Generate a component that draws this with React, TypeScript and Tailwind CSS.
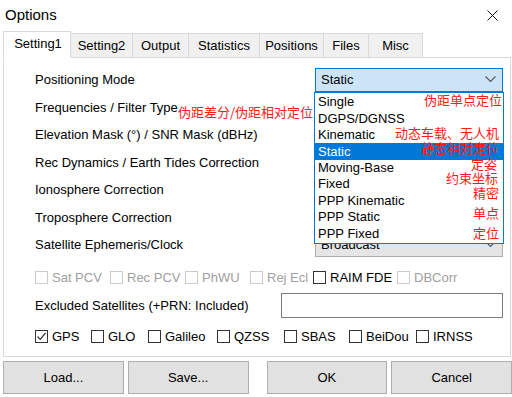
import React from 'react';

const font = { fontFamily: '"Liberation Sans", Arial, sans-serif' };
const cjk = { fontFamily: '"Noto Sans CJK SC", sans-serif' };

const tabs = [
  { name: 'Setting1', w: 'w-[68px]' },
  { name: 'Setting2', w: 'w-[63px]' },
  { name: 'Output', w: 'w-[57px]' },
  { name: 'Statistics', w: 'w-[72px]' },
  { name: 'Positions', w: 'w-[65px]' },
  { name: 'Files', w: 'w-[46px]' },
  { name: 'Misc', w: 'w-[55px]' },
];

const rows = [
  'Positioning Mode',
  'Frequencies / Filter Type',
  'Elevation Mask (°) / SNR Mask (dBHz)',
  'Rec Dynamics / Earth Tides Correction',
  'Ionosphere Correction',
  'Troposphere Correction',
  'Satellite Ephemeris/Clock',
];

const modes = [
  'Single',
  'DGPS/DGNSS',
  'Kinematic',
  'Static',
  'Moving-Base',
  'Fixed',
  'PPP Kinematic',
  'PPP Static',
  'PPP Fixed',
];

const notes = [
  { text: '伪距差分/伪距相对定位', cls: 'left-[178px] top-[103px]' },
  { text: '伪距单点定位', cls: 'left-[424px] top-[91px]' },
  { text: '动态车载、无人机', cls: 'left-[395px] top-[124px]' },
  { text: '静态相对定位', cls: 'left-[421px] top-[139px]' },
  { text: '定姿', cls: 'left-[471px] top-[155px]' },
  { text: '约束坐标', cls: 'left-[446px] top-[169px]' },
  { text: '精密', cls: 'left-[473px] top-[184px]' },
  { text: '单点', cls: 'left-[473px] top-[204px]' },
  { text: '定位', cls: 'left-[473px] top-[224px]' },
];

const Chevron = () => (
  <svg width="11" height="7" viewBox="0 0 11 7" className="shrink-0">
    <path d="M0.5 0.5 L5.5 5.5 L10.5 0.5" fill="none" stroke="#555" strokeWidth="1.1" />
  </svg>
);

const Box = ({ checked, disabled }: { checked?: boolean; disabled?: boolean }) => (
  <span
    className={
      'flex h-[13px] w-[13px] shrink-0 items-center justify-center border bg-white ' +
      (disabled ? 'border-[#cccccc]' : 'border-[#333333]')
    }
  >
    {checked && (
      <svg width="11" height="11" viewBox="0 0 11 11">
        <path d="M1.5 5.5 L4.2 8.3 L9.5 2" fill="none" stroke="#333" strokeWidth="1.2" />
      </svg>
    )}
  </span>
);

const Check = ({ label, checked, disabled, w }: { label: string; checked?: boolean; disabled?: boolean; w: string }) => (
  <div className={'flex items-center gap-[4px] ' + w}>
    <Box checked={checked} disabled={disabled} />
    <span className={disabled ? 'text-[#a0a0a0]' : 'text-black'}>{label}</span>
  </div>
);

export default function App() {
  return (
    <div className="relative h-[397px] w-[512px] overflow-hidden bg-white text-[13px] text-black" style={font}>
      {/* title bar */}
      <div className="flex h-[31px] items-center justify-between pl-[5px] pr-[14px]">
        <span className="text-[15px]">Options</span>
        <svg width="11" height="11" viewBox="0 0 11 11">
          <path d="M0.5 0.5 L10.5 10.5 M10.5 0.5 L0.5 10.5" stroke="#111" strokeWidth="1" />
        </svg>
      </div>

      {/* tabs */}
      <div className="ml-[3px] flex h-[26px] items-end text-[13px]">
        {tabs.map((t, i) => (
          <div
            key={t.name}
            className={
              'flex items-center justify-center border border-[#d9d9d9] ' +
              t.w +
              (i === 0
                ? ' relative z-10 h-[27px] -mb-px border-b-white bg-white pb-[2px] pl-[2px]'
                : ' h-[24px] -ml-px border-b-0 bg-[#f0f0f0]')
            }
          >
            {t.name}
          </div>
        ))}
      </div>

      {/* panel */}
      <div className="mx-[3px] flex h-[300px] w-[508px] flex-col border border-[#d9d9d9] bg-white pl-[31px] pr-[7px] pt-[8px]">
        {rows.map((r, i) => (
          <div key={r} className="flex h-[27.5px] items-center justify-between">
            <span>{r}</span>
            <div
              className={
                'flex h-[24px] w-[188px] items-center justify-between border pl-[5px] pr-[6px] ' +
                (i === 0 ? 'border-[#0078d7] bg-[#cce4f7]' : 'border-[#adadad] bg-[#e5e5e5]')
              }
            >
              <span>{i === 0 ? 'Static' : i === 6 ? 'Broadcast' : ''}</span>
              <Chevron />
            </div>
          </div>
        ))}

        <div className="mt-[9px] flex h-[20px] items-center">
          <Check label="Sat PCV" disabled w="w-[75px]" />
          <Check label="Rec PCV" disabled w="w-[75px]" />
          <Check label="PhWU" disabled w="w-[65px]" />
          <Check label="Rej Ecl" disabled w="w-[63px]" />
          <Check label="RAIM FDE" w="w-[84px]" />
          <Check label="DBCorr" disabled w="w-[80px]" />
        </div>

        <div className="mt-[5px] flex h-[26px] items-center justify-between">
          <span>Excluded Satellites (+PRN: Included)</span>
          <div className="h-[25px] w-[222px] border border-[#7a7a7a] bg-white" />
        </div>

        <div className="mt-[8px] flex h-[20px] items-center">
          <Check label="GPS" checked w="w-[56px]" />
          <Check label="GLO" w="w-[57px]" />
          <Check label="Galileo" w="w-[69px]" />
          <Check label="QZSS" w="w-[67px]" />
          <Check label="SBAS" w="w-[65px]" />
          <Check label="BeiDou" w="w-[67px]" />
          <Check label="IRNSS" w="w-[70px]" />
        </div>
      </div>

      {/* buttons */}
      <div className="ml-[3px] mt-[4px] flex h-[33px] gap-[4px]">
        {['Load...', 'Save...', 'OK', 'Cancel'].map((b, i) => (
          <div
            key={b}
            className={
              'flex h-[33px] w-[121px] items-center justify-center border border-[#adadad] bg-[#e1e1e1]' +
              (i === 2 ? ' ml-[14px]' : '')
            }
          >
            {b}
          </div>
        ))}
      </div>

      {/* open drop-down list */}
      <div className="absolute left-[314px] top-[92px] flex w-[190px] flex-col border border-[#0078d7] bg-white py-[1px]">
        {modes.map((m) => (
          <div
            key={m}
            className={
              'flex h-[16.4px] items-center pl-[3px] ' + (m === 'Static' ? 'bg-[#0078d7] text-white' : '')
            }
          >
            {m}
          </div>
        ))}
      </div>

      {/* red annotations */}
      {notes.map((n) => (
        <span key={n.text} className={'absolute text-[13px] leading-[18px] text-[#ff1a1a] ' + n.cls} style={cjk}>
          {n.text}
        </span>
      ))}
    </div>
  );
}
